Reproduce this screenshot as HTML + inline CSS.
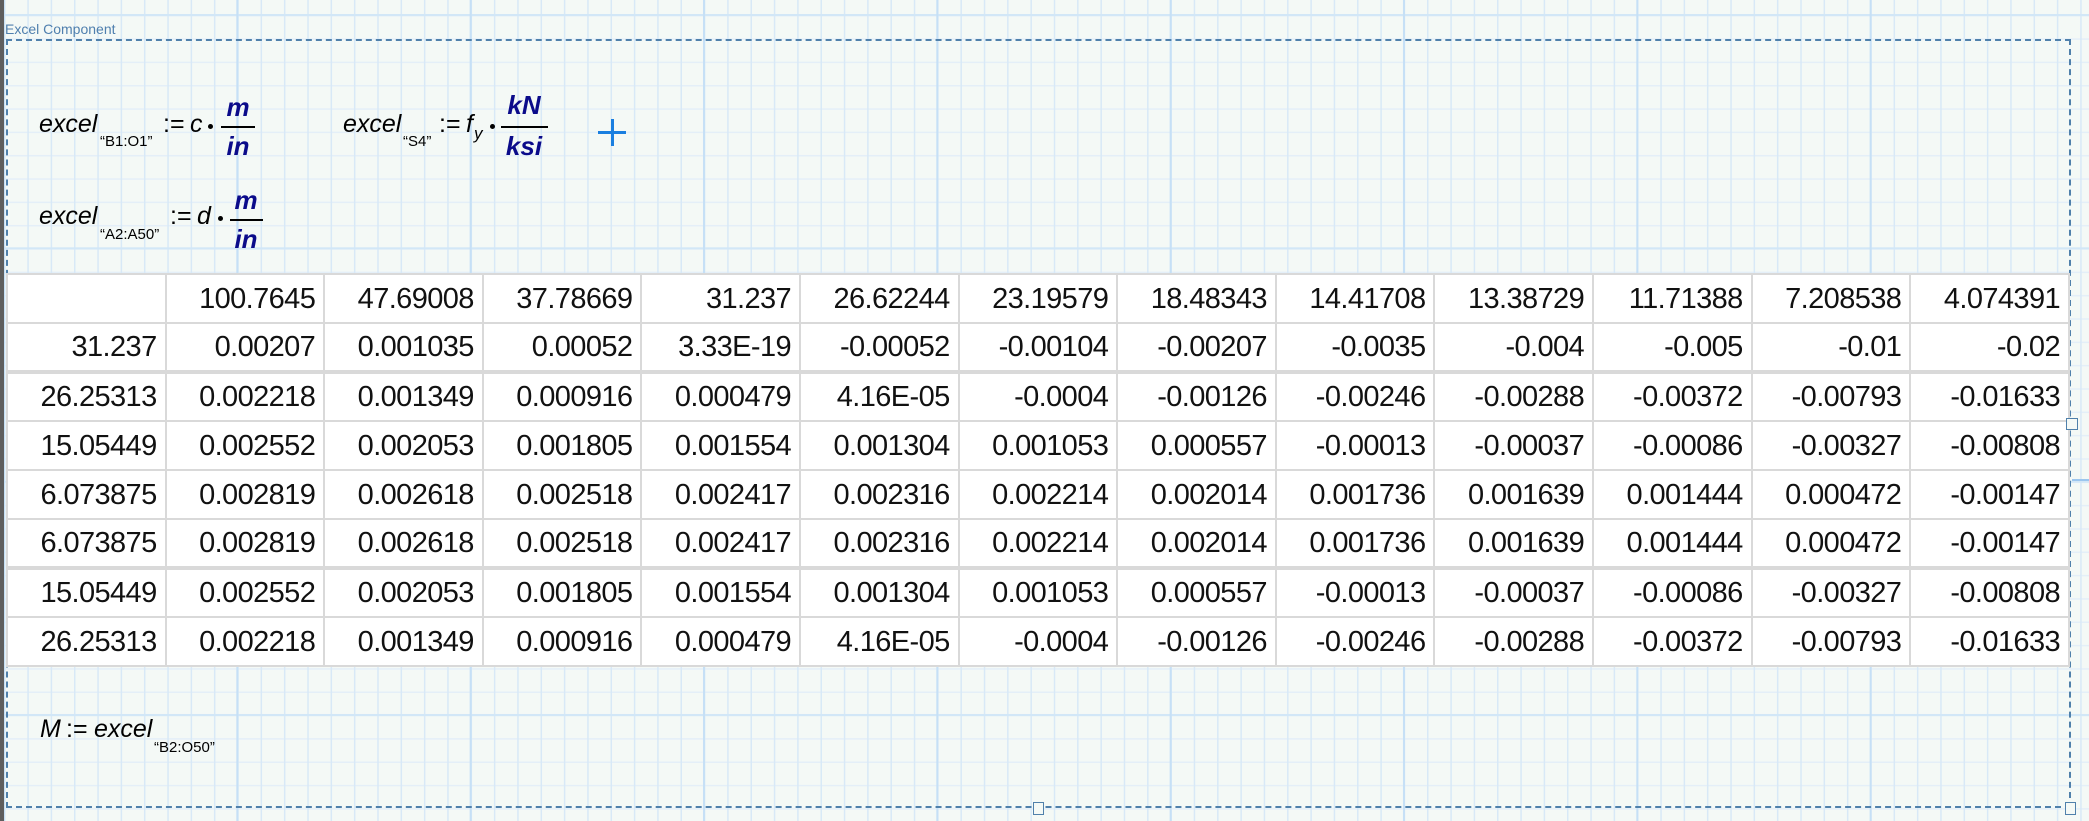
<!DOCTYPE html>
<html><head><meta charset="utf-8"><style>
html,body{margin:0;padding:0}
body{width:2089px;height:821px;position:relative;overflow:hidden;background:#f4f9f6;font-family:"Liberation Sans",sans-serif}
.grid{position:absolute;inset:0;
background-image:
linear-gradient(to right,#c6e0f6 2px,transparent 2px),
linear-gradient(to bottom,#d2e7f7 2px,transparent 2px),
linear-gradient(to right,#d8e9f7 1.5px,transparent 1.5px),
linear-gradient(to bottom,#e4eff8 1.5px,transparent 1.5px);
background-size:233.333px 100%,100% 233.333px,23.333px 100%,100% 23.333px;
background-position:3px 0,0 14px,4px 0,0 15px;}
.lbar{position:absolute;left:0;top:0;width:4px;height:821px;background:#5e5e5e}
.dash{position:absolute;left:6px;top:39px;width:2065px;height:769px;box-sizing:border-box;border:2px dashed #4f80ab;}
.t{position:absolute;white-space:nowrap;line-height:1;color:#000}
.i{font-style:italic}
.s{font-size:15px}
.n{font-size:25px}
.u{font-weight:bold;font-style:italic;color:#0b0b8a;font-size:26px;text-align:center}
.fl{position:absolute;height:1.5px;background:#000}
.dot{position:absolute;width:5px;height:5px;border-radius:50%;background:#000}
table{position:absolute;left:6px;top:273px;width:2064px;border-collapse:collapse;table-layout:fixed;background:#fff}
tr{height:49px}
td{border:2px solid #d9d9d9;text-align:right;padding:0 8px 0 0;font-size:29px;color:#111;line-height:30px;overflow:hidden;white-space:nowrap;letter-spacing:-0.6px;vertical-align:middle}
tr.tk td{border-bottom:4px solid #d9d9d9}
.h{position:absolute;width:10px;height:10px;border:1.5px solid #4f80ab;background:#f4f9f6}
</style></head><body>
<div class="grid"></div>
<div class="lbar"></div>
<div class="dash"></div>
<div class="t" style="left:5px;top:22px;font-size:14px;color:#4f7fae">Excel Component</div>

<div class="t i n" style="left:39px;top:112px">excel</div>
<div class="t s" style="left:100px;top:134px">“B1:O1”</div>
<div class="t n" style="left:163px;top:112px">:=</div>
<div class="t i n" style="left:190px;top:112px">c</div>
<div class="dot" style="left:208px;top:124px"></div>
<div class="fl" style="left:221px;top:126px;width:34px"></div>
<div class="t u" style="left:218px;top:94px;width:40px">m</div>
<div class="t u" style="left:218px;top:133px;width:40px">in</div>

<div class="t i n" style="left:343px;top:112px">excel</div>
<div class="t s" style="left:403px;top:134px">“S4”</div>
<div class="t n" style="left:439px;top:112px">:=</div>
<div class="t i n" style="left:466px;top:112px">f</div>
<div class="t i" style="left:474px;top:125px;font-size:17px">y</div>
<div class="dot" style="left:490px;top:124px"></div>
<div class="fl" style="left:501px;top:126px;width:47px"></div>
<div class="t u" style="left:494px;top:92px;width:60px">kN</div>
<div class="t u" style="left:494px;top:133px;width:60px">ksi</div>
<div style="position:absolute;left:598px;top:131px;width:28px;height:2.5px;background:#1a7fe0"></div>
<div style="position:absolute;left:611px;top:119px;width:2.5px;height:27px;background:#1a7fe0"></div>

<div class="t i n" style="left:39px;top:204px">excel</div>
<div class="t s" style="left:100px;top:227px">“A2:A50”</div>
<div class="t n" style="left:170px;top:204px">:=</div>
<div class="t i n" style="left:197px;top:204px">d</div>
<div class="dot" style="left:218px;top:216px"></div>
<div class="fl" style="left:230px;top:219px;width:33px"></div>
<div class="t u" style="left:226px;top:187px;width:40px">m</div>
<div class="t u" style="left:226px;top:226px;width:40px">in</div>

<table>
<tr><td></td><td>100.7645</td><td>47.69008</td><td>37.78669</td><td>31.237</td><td>26.62244</td><td>23.19579</td><td>18.48343</td><td>14.41708</td><td>13.38729</td><td>11.71388</td><td>7.208538</td><td>4.074391</td></tr>
<tr class="tk"><td>31.237</td><td>0.00207</td><td>0.001035</td><td>0.00052</td><td>3.33E-19</td><td>-0.00052</td><td>-0.00104</td><td>-0.00207</td><td>-0.0035</td><td>-0.004</td><td>-0.005</td><td>-0.01</td><td>-0.02</td></tr>
<tr><td>26.25313</td><td>0.002218</td><td>0.001349</td><td>0.000916</td><td>0.000479</td><td>4.16E-05</td><td>-0.0004</td><td>-0.00126</td><td>-0.00246</td><td>-0.00288</td><td>-0.00372</td><td>-0.00793</td><td>-0.01633</td></tr>
<tr><td>15.05449</td><td>0.002552</td><td>0.002053</td><td>0.001805</td><td>0.001554</td><td>0.001304</td><td>0.001053</td><td>0.000557</td><td>-0.00013</td><td>-0.00037</td><td>-0.00086</td><td>-0.00327</td><td>-0.00808</td></tr>
<tr><td>6.073875</td><td>0.002819</td><td>0.002618</td><td>0.002518</td><td>0.002417</td><td>0.002316</td><td>0.002214</td><td>0.002014</td><td>0.001736</td><td>0.001639</td><td>0.001444</td><td>0.000472</td><td>-0.00147</td></tr>
<tr class="tk"><td>6.073875</td><td>0.002819</td><td>0.002618</td><td>0.002518</td><td>0.002417</td><td>0.002316</td><td>0.002214</td><td>0.002014</td><td>0.001736</td><td>0.001639</td><td>0.001444</td><td>0.000472</td><td>-0.00147</td></tr>
<tr><td>15.05449</td><td>0.002552</td><td>0.002053</td><td>0.001805</td><td>0.001554</td><td>0.001304</td><td>0.001053</td><td>0.000557</td><td>-0.00013</td><td>-0.00037</td><td>-0.00086</td><td>-0.00327</td><td>-0.00808</td></tr>
<tr><td>26.25313</td><td>0.002218</td><td>0.001349</td><td>0.000916</td><td>0.000479</td><td>4.16E-05</td><td>-0.0004</td><td>-0.00126</td><td>-0.00246</td><td>-0.00288</td><td>-0.00372</td><td>-0.00793</td><td>-0.01633</td></tr>
</table>

<div class="t i n" style="left:40px;top:717px">M</div>
<div class="t n" style="left:66px;top:717px">:=</div>
<div class="t i n" style="left:94px;top:717px">excel</div>
<div class="t s" style="left:154px;top:740px">“B2:O50”</div>

<div class="h" style="left:2066px;top:418px"></div>
<div class="h" style="left:1033px;top:802px;width:9px;height:11px"></div>
<div class="h" style="left:2065px;top:802px;width:9px;height:11px"></div>
<div style="position:absolute;left:2072px;top:479px;width:17px;height:2px;background:#9cc6ee"></div>
</body></html>
